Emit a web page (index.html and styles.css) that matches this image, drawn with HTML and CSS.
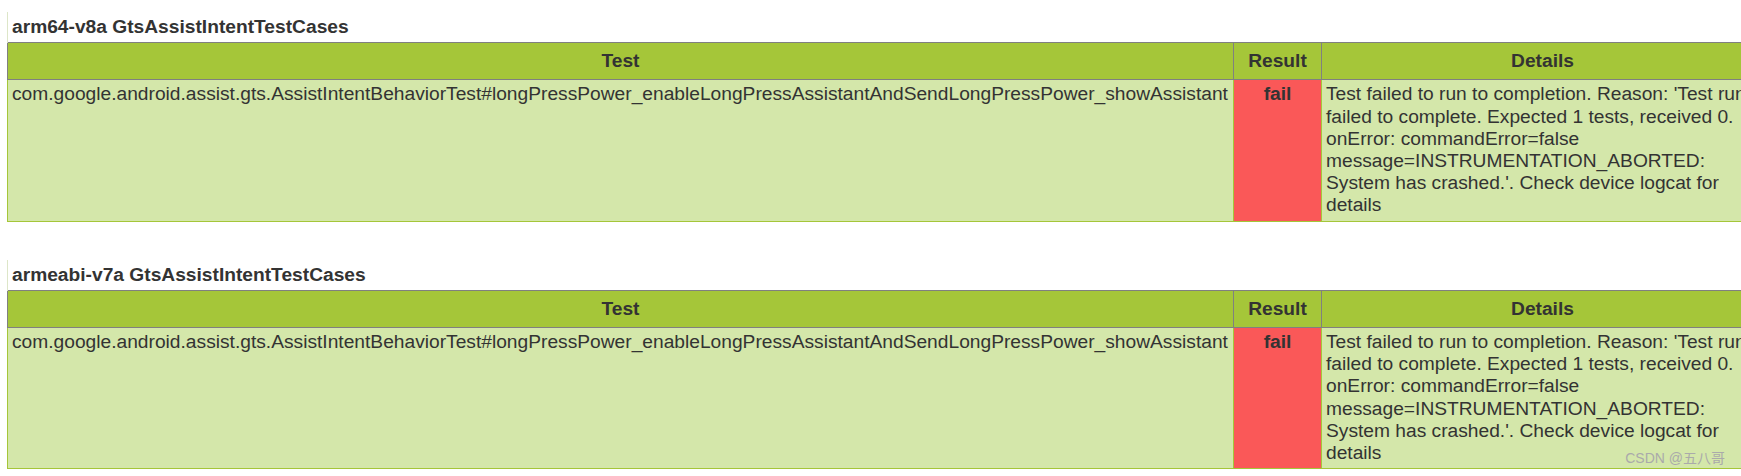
FILE: index.html
```html
<!DOCTYPE html>
<html>
<head>
<meta charset="utf-8">
<link rel="stylesheet" href="styles.css">
</head>
<body>
<table class="testdetails">
  <colgroup><col class="c-test"><col class="c-result"><col class="c-details"></colgroup>
  <tr><td class="module" colspan="3">arm64-v8a GtsAssistIntentTestCases</td></tr>
  <tr><th>Test</th><th>Result</th><th>Details</th></tr>
  <tr>
    <td class="testname">com.google.android.assist.gts.AssistIntentBehaviorTest#longPressPower_enableLongPressAssistantAndSendLongPressPower_showAssistant</td>
    <td class="failed">fail</td>
    <td class="failuredetails">Test failed to run to completion. Reason: 'Test run<br>failed to complete. Expected 1 tests, received 0.<br>onError: commandError=false<br>message=INSTRUMENTATION_ABORTED:<br>System has crashed.'. Check device logcat for<br>details</td>
  </tr>
</table>
<table class="testdetails">
  <colgroup><col class="c-test"><col class="c-result"><col class="c-details"></colgroup>
  <tr><td class="module" colspan="3">armeabi-v7a GtsAssistIntentTestCases</td></tr>
  <tr><th>Test</th><th>Result</th><th>Details</th></tr>
  <tr>
    <td class="testname">com.google.android.assist.gts.AssistIntentBehaviorTest#longPressPower_enableLongPressAssistantAndSendLongPressPower_showAssistant</td>
    <td class="failed">fail</td>
    <td class="failuredetails">Test failed to run to completion. Reason: 'Test run<br>failed to complete. Expected 1 tests, received 0.<br>onError: commandError=false<br>message=INSTRUMENTATION_ABORTED:<br>System has crashed.'. Check device logcat for<br>details</td>
  </tr>
</table>
<div class="watermark">CSDN @五八哥</div>
</body>
</html>
```
FILE: styles.css
```css
html {
  overflow: hidden;
}
body {
  margin: 0;
  padding: 12px 0 0 7px;
  font-family: "Liberation Sans", Arial, sans-serif;
  font-size: 19.2px;
  line-height: 22.2px;
  color: #333;
  background: #fff;
}
table.testdetails {
  border-collapse: collapse;
  table-layout: fixed;
  width: 1756px;
  margin: 0 0 38px 0;
}
table.testdetails:last-of-type {
  margin-bottom: 0;
}
.c-test { width: 1226px; }
.c-result { width: 88px; }
.c-details { width: 442px; }
td.module {
  background: #fff;
  font-weight: bold;
  font-size: 19.2px;
  padding: 4px 4px;
  border-left: 1px solid #dde6c8;
  border-top: none;
  border-right: none;
  border-bottom: none;
}
th {
  background: #a5c639;
  border: 1px solid #808080;
  padding: 7px 4px;
  font-weight: bold;
  text-align: center;
  color: #333;
}
td {
  background: #d4e7aa;
  border: 1px solid #a5c639;
  padding: 3px 4px 4px;
  vertical-align: top;
}
td.testname {
  white-space: nowrap;
}
td.failed {
  background: #fa5858;
  font-weight: bold;
  text-align: center;
}
td.failuredetails {
  text-align: left;
  white-space: nowrap;
}
.watermark {
  position: absolute;
  right: 16px;
  top: 449px;
  font-size: 14px;
  line-height: 18px;
  color: #aaaaaa;
  font-family: "Liberation Sans", "Noto Sans CJK SC", sans-serif;
}
```
